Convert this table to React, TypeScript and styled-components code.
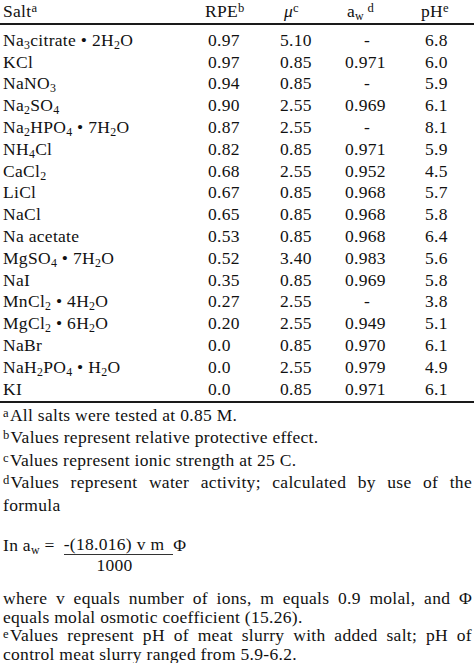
import React from "react";
import styled, { createGlobalStyle } from "styled-components";

const Global = createGlobalStyle`
  html, body { margin: 0; padding: 0; background: #ffffff; }
  body {
    font-family: "Liberation Serif", "Times New Roman", serif;
    color: #111111;
    font-size: 17.5px;
    letter-spacing: 0.3px;
  }
`;

const Page = styled.div`
  width: 474px;
  padding-top: 1px;
  box-sizing: border-box;
`;

const Grid = styled.div`
  display: grid;
  grid-template-columns: 202px 73px 65px 78px 1fr;
  padding-left: 3px;
  line-height: 21.8px;
  height: 21.8px;
  white-space: nowrap;
`;

const Cell = styled.div<{ $indent?: number }>`
  padding-left: ${(p) => p.$indent ?? 0}px;
`;

const Rule = styled.div<{ $top?: number; $bottom?: number }>`
  height: 2px;
  background: #1a1a1a;
  margin-top: ${(p) => p.$top ?? 0}px;
  margin-bottom: ${(p) => p.$bottom ?? 0}px;
`;

const Sub = styled.sub`
  font-size: 0.68em;
  vertical-align: -0.28em;
  line-height: 0;
`;

const Sup = styled.sup<{ $raise?: number }>`
  font-size: 0.72em;
  vertical-align: ${(p) => p.$raise ?? 0.42}em;
  line-height: 0;
  margin-right: 1px;
`;

const Mu = styled.span`
  font-style: italic;
`;

const Notes = styled.div`
  padding: 1px 2px 0 3px;
`;

const Note = styled.p<{ $lh?: number }>`
  margin: 0;
  line-height: ${(p) => p.$lh ?? 22.5}px;
  text-align: justify;
`;

const Formula = styled.div`
  display: flex;
  align-items: flex-start;
  margin: 19px 0 13px 0;
  line-height: 20px;
  white-space: pre;
`;

const Fraction = styled.div`
  display: flex;
  flex-direction: column;
  align-items: center;
  margin-left: 9px;
`;

const Numerator = styled.div`
  border-bottom: 1px solid #333;
  padding-right: 9px;
  line-height: 19px;
`;

const Denominator = styled.div`
  line-height: 21px;
  padding-right: 8px;
`;

const Phi = styled.span`
  margin-left: 0;
`;

type Row = {
  salt: React.ReactNode;
  rpe: string;
  mu: string;
  aw: string;
  ph: string;
};

const dot = " \u2022 ";

const rows: Row[] = [
  { salt: <>Na<Sub>3</Sub>citrate{dot}2H<Sub>2</Sub>O</>, rpe: "0.97", mu: "5.10", aw: "-", ph: "6.8" },
  { salt: <>KCl</>, rpe: "0.97", mu: "0.85", aw: "0.971", ph: "6.0" },
  { salt: <>NaNO<Sub>3</Sub></>, rpe: "0.94", mu: "0.85", aw: "-", ph: "5.9" },
  { salt: <>Na<Sub>2</Sub>SO<Sub>4</Sub></>, rpe: "0.90", mu: "2.55", aw: "0.969", ph: "6.1" },
  { salt: <>Na<Sub>2</Sub>HPO<Sub>4</Sub>{dot}7H<Sub>2</Sub>O</>, rpe: "0.87", mu: "2.55", aw: "-", ph: "8.1" },
  { salt: <>NH<Sub>4</Sub>Cl</>, rpe: "0.82", mu: "0.85", aw: "0.971", ph: "5.9" },
  { salt: <>CaCl<Sub>2</Sub></>, rpe: "0.68", mu: "2.55", aw: "0.952", ph: "4.5" },
  { salt: <>LiCl</>, rpe: "0.67", mu: "0.85", aw: "0.968", ph: "5.7" },
  { salt: <>NaCl</>, rpe: "0.65", mu: "0.85", aw: "0.968", ph: "5.8" },
  { salt: <>Na acetate</>, rpe: "0.53", mu: "0.85", aw: "0.968", ph: "6.4" },
  { salt: <>MgSO<Sub>4</Sub>{dot}7H<Sub>2</Sub>O</>, rpe: "0.52", mu: "3.40", aw: "0.983", ph: "5.6" },
  { salt: <>NaI</>, rpe: "0.35", mu: "0.85", aw: "0.969", ph: "5.8" },
  { salt: <>MnCl<Sub>2</Sub>{dot}4H<Sub>2</Sub>O</>, rpe: "0.27", mu: "2.55", aw: "-", ph: "3.8" },
  { salt: <>MgCl<Sub>2</Sub>{dot}6H<Sub>2</Sub>O</>, rpe: "0.20", mu: "2.55", aw: "0.949", ph: "5.1" },
  { salt: <>NaBr</>, rpe: "0.0", mu: "0.85", aw: "0.970", ph: "6.1" },
  { salt: <>NaH<Sub>2</Sub>PO<Sub>4</Sub>{dot}H<Sub>2</Sub>O</>, rpe: "0.0", mu: "2.55", aw: "0.979", ph: "4.9" },
  { salt: <>KI</>, rpe: "0.0", mu: "0.85", aw: "0.971", ph: "6.1" },
];

export default function App() {
  return (
    <Page>
      <Global />
      <Grid>
        <Cell>Salt<Sup>a</Sup></Cell>
        <Cell $indent={-2}>RPE<Sup>b</Sup></Cell>
        <Cell $indent={6}><Mu>μ</Mu><Sup>c</Sup></Cell>
        <Cell $indent={4}>a<Sub>w</Sub><Sup> d</Sup></Cell>
        <Cell $indent={-1}>pH<Sup>e</Sup></Cell>
      </Grid>
      <Rule $bottom={5} />
      {rows.map((r, i) => (
        <Grid key={i}>
          <Cell>{r.salt}</Cell>
          <Cell $indent={3}>{r.rpe}</Cell>
          <Cell $indent={2}>{r.mu}</Cell>
          <Cell $indent={r.aw === "-" ? 21 : 2}>{r.aw}</Cell>
          <Cell $indent={4}>{r.ph}</Cell>
        </Grid>
      ))}
      <Rule $top={0.5} />
      <Notes>
        <Note><Sup $raise={0.32}>a</Sup>All salts were tested at 0.85 M.</Note>
        <Note><Sup $raise={0.32}>b</Sup>Values represent relative protective effect.</Note>
        <Note><Sup $raise={0.32}>c</Sup>Values represent ionic strength at 25 C.</Note>
        <Note><Sup $raise={0.32}>d</Sup>Values represent water activity; calculated by use of the formula</Note>
        <Formula>
          <span>In a<Sub>w</Sub> =</span>
          <Fraction>
            <Numerator>-(18.016) v m</Numerator>
            <Denominator>1000</Denominator>
          </Fraction>
          <Phi>Φ</Phi>
        </Formula>
        <Note $lh={18.5}>where v equals number of ions, m equals 0.9 molal, and Φ equals molal osmotic coefficient (15.26).</Note>
        <Note $lh={18.5}><Sup $raise={0.28}>e</Sup>Values represent pH of meat slurry with added salt; pH of control meat slurry ranged from 5.9-6.2.</Note>
      </Notes>
    </Page>
  );
}
